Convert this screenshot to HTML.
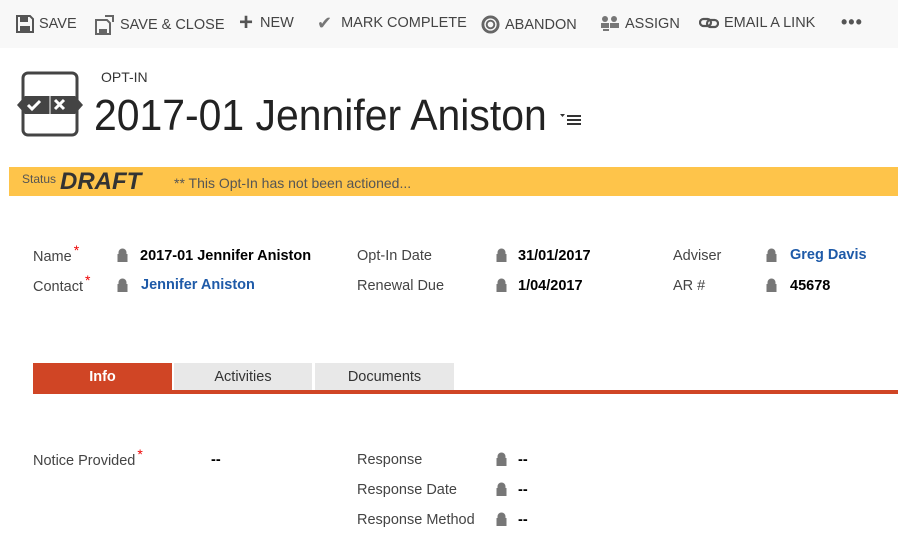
<!DOCTYPE html>
<html><head><meta charset="utf-8"><style>
*{margin:0;padding:0;box-sizing:border-box}
body{width:898px;height:554px;background:#fff;font-family:"Liberation Sans",sans-serif;color:#444;position:relative;overflow:hidden}
.a{position:absolute;white-space:nowrap}
.tb{position:absolute;left:0;top:0;width:898px;height:48px;background:#f8f8f8}
.tbi{position:absolute;top:15px;font-size:14.5px;color:#444;display:flex;align-items:center}
.tbi svg{margin-right:5px}
.lbl{font-size:14.5px;color:#444}
.val{font-size:14.5px;font-weight:bold;color:#000}
.lnk{font-size:14.5px;font-weight:bold;color:#1e5aa8}
.req{color:#e00;font-size:14px;position:relative;top:-6px;margin-left:2px}
.lock{position:absolute;width:11px;height:14px}
</style></head><body>
<div class="tb"></div>
<div class="tbi" style="left:16px"><svg width="18" height="18" viewBox="0 0 18 18"><path d="M1 1h13l3 3v13H1z" fill="none" stroke="#555" stroke-width="2"/><rect x="4" y="2" width="8" height="5" fill="#555"/><rect x="4" y="11" width="10" height="5" fill="#555"/></svg>SAVE</div>
<div class="tbi" style="left:95px"><svg width="20" height="20" viewBox="0 0 20 20"><path d="M1 5h11l3 3v11H1z" fill="none" stroke="#666" stroke-width="2"/><rect x="4" y="14" width="8" height="4" fill="#666"/><path d="M10 1h8v6" fill="none" stroke="#666" stroke-width="2"/></svg>SAVE &amp; CLOSE</div>
<div class="tbi" style="left:239px"><span style="font-size:24px;font-weight:bold;color:#555;margin-right:7px;line-height:16px">+</span>NEW</div>
<div class="tbi" style="left:317px"><span style="font-size:18px;color:#777;margin-right:9px;line-height:16px">✔</span>MARK COMPLETE</div>
<div class="tbi" style="left:481px"><svg width="19" height="19" viewBox="0 0 20 20"><circle cx="10" cy="10" r="8" fill="none" stroke="#666" stroke-width="3"/><circle cx="10" cy="10" r="4" fill="none" stroke="#666" stroke-width="2"/></svg>ABANDON</div>
<div class="tbi" style="left:600px"><svg width="20" height="18" viewBox="0 0 20 18"><circle cx="5" cy="4" r="3" fill="#777"/><circle cx="14" cy="4" r="3" fill="#777"/><rect x="1" y="8" width="8" height="5" fill="#777"/><rect x="10" y="8" width="9" height="5" fill="#777"/><path d="M3 15h6" stroke="#777" stroke-width="2"/></svg>ASSIGN</div>
<div class="tbi" style="left:699px"><svg width="20" height="12" viewBox="0 0 20 12"><rect x="1" y="2" width="11" height="7" rx="3.5" fill="none" stroke="#555" stroke-width="2.2"/><rect x="8" y="3" width="11" height="7" rx="3.5" fill="none" stroke="#555" stroke-width="2.2"/></svg>EMAIL A LINK</div>
<div class="tbi" style="left:841px;font-size:18px;font-weight:bold;color:#555;top:12px;letter-spacing:1px">•••</div>

<svg class="a" style="left:16px;top:70px" width="70" height="68" viewBox="0 0 70 68"><rect x="7" y="3" width="54" height="62" rx="5" fill="none" stroke="#444" stroke-width="3"/><path d="M1 35l8-9h50l8 9-8 9H9z" fill="#444"/><path d="M12 35l4 4 8-8" fill="none" stroke="#fff" stroke-width="3"/><path d="M39 30l9 9M48 30l-9 9" stroke="#fff" stroke-width="3"/><path d="M34 26v18" stroke="#fff" stroke-width="1"/></svg>
<div class="a" style="left:101px;top:69px;font-size:14px;color:#333">OPT-IN</div>
<div class="a" style="left:94px;top:91px;font-size:44px;color:#222;font-weight:300;transform:scaleX(0.93);transform-origin:left">2017-01 Jennifer Aniston</div>
<svg class="a" style="left:560px;top:113px" width="22" height="14" viewBox="0 0 22 14"><path d="M0 1h5l-2.5 3z" fill="#333"/><rect x="7" y="2" width="14" height="2" fill="#333"/><rect x="7" y="6" width="14" height="2" fill="#333"/><rect x="7" y="10" width="14" height="2" fill="#333"/></svg>

<div class="a" style="left:9px;top:167px;width:889px;height:29px;background:#fec44a"></div>
<div class="a" style="left:22px;top:172px;font-size:12px;color:#555">Status</div>
<div class="a" style="left:60px;top:168px;font-size:24px;font-weight:bold;font-style:italic;color:#333">DRAFT</div>
<div class="a" style="left:174px;top:175px;font-size:14px;color:#555">** This Opt-In has not been actioned...</div>

<div class="a lbl" style="left:33px;top:248px">Name<span class="req">*</span></div>
<div class="a lbl" style="left:33px;top:278px">Contact<span class="req">*</span></div>
<div class="a val" style="left:140px;top:248px">2017-01 Jennifer Aniston</div>
<div class="a lnk" style="left:141px;top:277px">Jennifer Aniston</div>
<div class="a lbl" style="left:357px;top:248px">Opt-In Date</div>
<div class="a lbl" style="left:357px;top:278px">Renewal Due</div>
<div class="a val" style="left:518px;top:248px">31/01/2017</div>
<div class="a val" style="left:518px;top:278px">1/04/2017</div>
<div class="a lbl" style="left:673px;top:248px">Adviser</div>
<div class="a lbl" style="left:673px;top:278px">AR #</div>
<div class="a lnk" style="left:790px;top:247px">Greg Davis</div>
<div class="a val" style="left:790px;top:278px">45678</div>

<div class="a" style="left:33px;top:363px;width:139px;height:28px;background:#d04525;color:#fff;font-weight:bold;font-size:14.5px;text-align:center;line-height:29px">Info</div>
<div class="a" style="left:174px;top:363px;width:138px;height:28px;background:#e8e8e8;color:#333;font-size:14.5px;text-align:center;line-height:29px">Activities</div>
<div class="a" style="left:315px;top:363px;width:139px;height:28px;background:#e8e8e8;color:#333;font-size:14.5px;text-align:center;line-height:29px">Documents</div>
<div class="a" style="left:33px;top:390px;width:865px;height:4px;background:#d04525"></div>

<div class="a lbl" style="left:33px;top:452px">Notice Provided<span class="req">*</span></div>
<div class="a val" style="left:211px;top:452px">--</div>
<div class="a lbl" style="left:357px;top:452px">Response</div>
<div class="a lbl" style="left:357px;top:482px">Response Date</div>
<div class="a lbl" style="left:357px;top:512px">Response Method</div>
<div class="a val" style="left:518px;top:452px">--</div>
<div class="a val" style="left:518px;top:482px">--</div>
<div class="a val" style="left:518px;top:512px">--</div>

<svg width="0" height="0" style="position:absolute"><defs><g id="lk"><path d="M2.5 7V4.5a3 3 0 0 1 6 0V7" fill="#777"/><path d="M2.5 6V4.5a3 3 0 0 1 6 0V6" fill="none" stroke="#777" stroke-width="2"/><rect x="0.5" y="6" width="10" height="8" fill="#777"/></g></defs></svg>
<svg class="lock" style="left:117px;top:248px"><use href="#lk"/></svg>
<svg class="lock" style="left:117px;top:278px"><use href="#lk"/></svg>
<svg class="lock" style="left:496px;top:248px"><use href="#lk"/></svg>
<svg class="lock" style="left:496px;top:278px"><use href="#lk"/></svg>
<svg class="lock" style="left:766px;top:248px"><use href="#lk"/></svg>
<svg class="lock" style="left:766px;top:278px"><use href="#lk"/></svg>
<svg class="lock" style="left:496px;top:452px"><use href="#lk"/></svg>
<svg class="lock" style="left:496px;top:482px"><use href="#lk"/></svg>
<svg class="lock" style="left:496px;top:512px"><use href="#lk"/></svg>
</body></html>
